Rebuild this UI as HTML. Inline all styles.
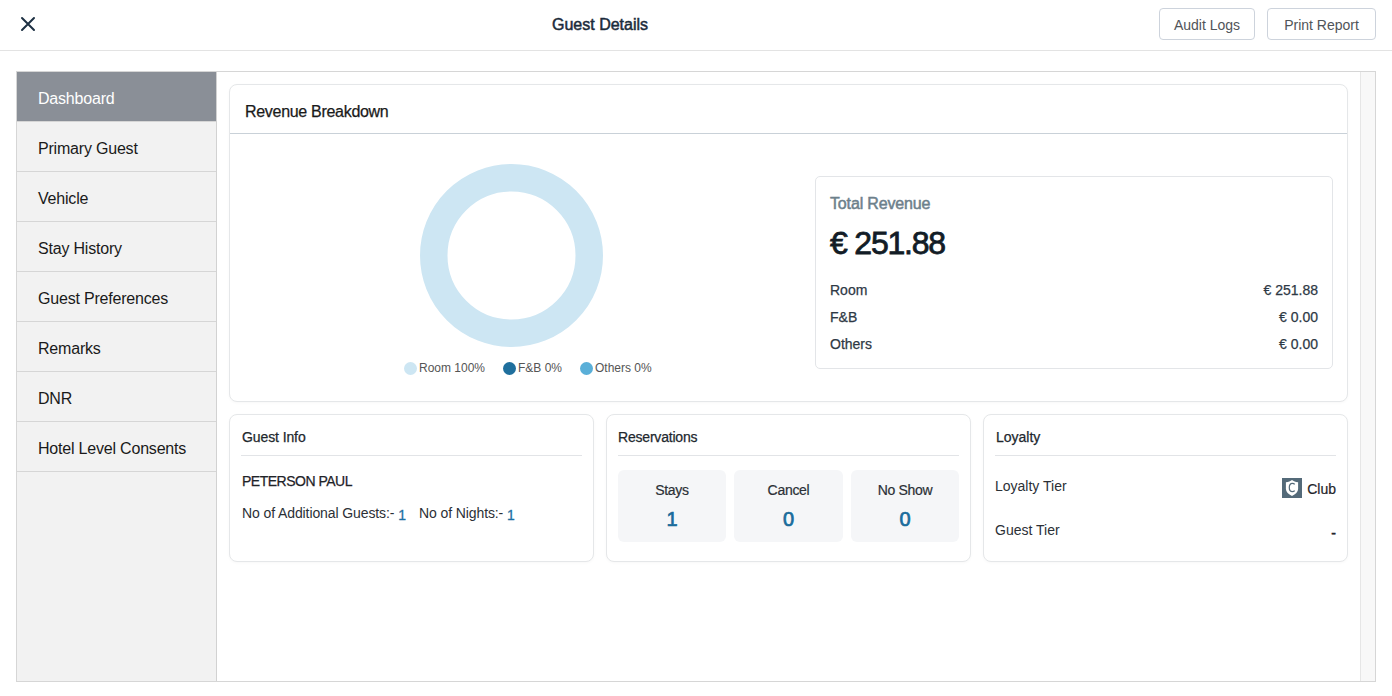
<!DOCTYPE html>
<html><head><meta charset="utf-8">
<style>
*{box-sizing:border-box;margin:0;padding:0}
html,body{width:1392px;height:696px;overflow:hidden;background:#fff;font-family:"Liberation Sans",sans-serif;color:#1f2a35}
.abs{position:absolute}
#hdr{position:absolute;left:0;top:0;width:1392px;height:51px;border-bottom:1px solid #e3e3e3}
#title{position:absolute;left:552px;top:16px;font-size:16px;-webkit-text-stroke:0.5px #1b2b3b;color:#1b2b3b;white-space:nowrap}
.btn{position:absolute;top:8px;height:32px;border:1px solid #cdd3dc;border-radius:4px;font-size:14px;color:#505459;line-height:32px;text-align:center;white-space:nowrap}
#wrap{position:absolute;left:16px;top:71px;width:1360px;height:611px;border:1px solid #d6d6d6}
#side{position:absolute;left:0;top:0;width:200px;height:609px;background:#f2f2f2;border-right:1px solid #d2d2d2}
.it{position:absolute;left:0;width:199px;height:50px;border-bottom:1px solid #d6d6d6;font-size:16px;letter-spacing:-0.2px;color:#1a1a1a;padding-left:21px;line-height:54px;white-space:nowrap}
.it.act{background:#8a8f97;color:#fff}
#sb{position:absolute;left:1343px;top:0;width:15px;height:609px;background:#f8f8f8;border-left:1px solid #e6e6e6}
.card{position:absolute;border:1px solid #e5e7e9;border-radius:8px;background:#fff;box-shadow:0 1px 3px rgba(0,0,0,0.03)}

.t{position:absolute;white-space:nowrap;line-height:1}
.lg{font-size:12px;color:#555}
.dot{position:absolute;width:13px;height:13px;border-radius:50%}
.rb{position:absolute;border:1px solid #e3e5e8;border-radius:5px}
.sbox{position:absolute;top:55px;height:72px;background:#f5f6f8;border-radius:6px}
.hl{position:absolute;height:1px;background:#e2e4e7}
.med{-webkit-text-stroke:0.25px currentColor}
</style></head>
<body>
<div id="hdr">
  <svg class="abs" style="left:20px;top:16px" width="16" height="16" viewBox="0 0 16 16"><path d="M2 2L14 14M14 2L2 14" stroke="#1d3043" stroke-width="2" stroke-linecap="round"/></svg>
  <div id="title">Guest Details</div>
  <div class="btn" style="left:1159px;width:96px">Audit Logs</div>
  <div class="btn" style="left:1267px;width:109px">Print Report</div>
</div>
<div id="wrap">
  <div id="side">
    <div class="it act" style="top:0">Dashboard</div>
    <div class="it" style="top:50px">Primary Guest</div>
    <div class="it" style="top:100px">Vehicle</div>
    <div class="it" style="top:150px">Stay History</div>
    <div class="it" style="top:200px">Guest Preferences</div>
    <div class="it" style="top:250px">Remarks</div>
    <div class="it" style="top:300px">DNR</div>
    <div class="it" style="top:350px">Hotel Level Consents</div>
  </div>
  <div id="sb"></div>
</div>

<div class="card" style="left:229px;top:84px;width:1119px;height:318px">
  <div class="t med" style="left:15px;top:19px;font-size:16px;color:#1a1a1a;letter-spacing:-0.3px">Revenue Breakdown</div>
  <div class="hl" style="left:0;top:48px;width:1117px;background:#c9d1d8"></div>
  <svg class="abs" style="left:190px;top:79px" width="184" height="184" viewBox="0 0 184 184"><circle cx="91.5" cy="91.5" r="77.75" fill="none" stroke="#cde6f3" stroke-width="27.5"/></svg>
  <div class="dot" style="left:173.5px;top:276.5px;background:#cde6f3"></div>
  <div class="t lg" style="left:189px;top:277px">Room 100%</div>
  <div class="dot" style="left:272.5px;top:276.5px;background:#1f6f9d"></div>
  <div class="t lg" style="left:288px;top:277px">F&amp;B 0%</div>
  <div class="dot" style="left:349.5px;top:276.5px;background:#5aafd8"></div>
  <div class="t lg" style="left:365px;top:277px">Others 0%</div>
  <div class="rb" style="left:585px;top:91px;width:518px;height:193px">
    <div class="t" style="left:14px;top:19px;font-size:16px;color:#6d808b;letter-spacing:-0.15px;-webkit-text-stroke:0.5px #6d808b">Total Revenue</div>
    <div class="t" style="left:14px;top:50px;font-size:32px;color:#121c26;letter-spacing:-1.2px;-webkit-text-stroke:0.8px #121c26">€ 251.88</div>
    <div class="t med" style="left:14px;top:106px;font-size:14px;color:#2e3945">Room</div>
    <div class="t med" style="left:14px;top:133px;font-size:14px;color:#2e3945">F&amp;B</div>
    <div class="t med" style="left:14px;top:160px;font-size:14px;color:#2e3945">Others</div>
    <div class="t med" style="right:14px;top:106px;font-size:14px;color:#2e3945">€ 251.88</div>
    <div class="t med" style="right:14px;top:133px;font-size:14px;color:#2e3945">€ 0.00</div>
    <div class="t med" style="right:14px;top:160px;font-size:14px;color:#2e3945">€ 0.00</div>
  </div>
</div>

<div class="card" style="left:229px;top:414px;width:365px;height:148px">
  <div class="t med" style="left:12px;top:15px;font-size:14px;color:#22282e;letter-spacing:-0.1px">Guest Info</div>
  <div class="hl" style="left:11px;top:40px;width:341px"></div>
  <div class="t med" style="left:12px;top:59px;font-size:14px;color:#1f2328;letter-spacing:-0.5px">PETERSON PAUL</div>
  <div class="t" style="left:12px;top:91px;font-size:14px;color:#2b3036;letter-spacing:-0.1px">No of Additional Guests:- <span style="color:#1c6fa3;position:relative;top:2px;-webkit-text-stroke:0.3px #1c6fa3">1</span></div>
  <div class="t" style="left:189px;top:91px;font-size:14px;color:#2b3036;letter-spacing:-0.1px">No of Nights:- <span style="color:#1c6fa3;position:relative;top:2px;-webkit-text-stroke:0.3px #1c6fa3">1</span></div>
</div>

<div class="card" style="left:606px;top:414px;width:365px;height:148px">
  <div class="t med" style="left:11px;top:15px;font-size:14px;color:#22282e;letter-spacing:-0.2px">Reservations</div>
  <div class="hl" style="left:11px;top:40px;width:341px"></div>
  <div class="sbox" style="left:11px;width:108px"><div class="t" style="left:0;width:108px;text-align:center;top:13px;font-size:14px;color:#2b3036;letter-spacing:-0.3px;-webkit-text-stroke:0.2px #2b3036">Stays</div><div class="t" style="left:0;width:108px;text-align:center;top:39px;font-size:20px;color:#1a6c9c;-webkit-text-stroke:0.7px #1a6c9c">1</div></div>
  <div class="sbox" style="left:127px;width:109px"><div class="t" style="left:0;width:109px;text-align:center;top:13px;font-size:14px;color:#2b3036;letter-spacing:-0.3px;-webkit-text-stroke:0.2px #2b3036">Cancel</div><div class="t" style="left:0;width:109px;text-align:center;top:39px;font-size:20px;color:#1a6c9c;-webkit-text-stroke:0.7px #1a6c9c">0</div></div>
  <div class="sbox" style="left:244px;width:108px"><div class="t" style="left:0;width:108px;text-align:center;top:13px;font-size:14px;color:#2b3036;letter-spacing:-0.3px;-webkit-text-stroke:0.2px #2b3036">No Show</div><div class="t" style="left:0;width:108px;text-align:center;top:39px;font-size:20px;color:#1a6c9c;-webkit-text-stroke:0.7px #1a6c9c">0</div></div>
</div>

<div class="card" style="left:983px;top:414px;width:365px;height:148px">
  <div class="t med" style="left:12px;top:15px;font-size:14px;color:#22282e">Loyalty</div>
  <div class="hl" style="left:11px;top:40px;width:341px"></div>
  <div class="t" style="left:11px;top:64px;font-size:14px;color:#2b3036">Loyalty Tier</div>
  <svg class="abs" style="left:298px;top:63px" width="20" height="20" viewBox="0 0 20 20"><rect width="20" height="20" fill="#546a79"/><path d="M10 2C11.5 3.3 13.5 4 16.1 4.2V11C16.1 14 13.5 16.3 10 17.9C6.5 16.3 3.9 14 3.9 11V4.2C6.5 4 8.5 3.3 10 2Z" fill="#fff"/><path d="M12.7 6.4C12.1 5.6 11.3 5.3 10.4 5.3C8.4 5.3 7.3 7.1 7.3 9.45C7.3 11.8 8.4 13.6 10.4 13.6C11.3 13.6 12.1 13.3 12.7 12.6" fill="none" stroke="#546a79" stroke-width="1.25"/></svg>
  <div class="t" style="right:11px;top:67px;font-size:14px;color:#1f252b;-webkit-text-stroke:0.2px #1f252b">Club</div>
  <div class="t" style="left:11px;top:108px;font-size:14px;color:#2b3036">Guest Tier</div>
  <div class="t" style="right:11px;top:111px;font-size:14px;color:#1f252b;-webkit-text-stroke:0.5px #1f252b">-</div>
</div>
</body></html>
